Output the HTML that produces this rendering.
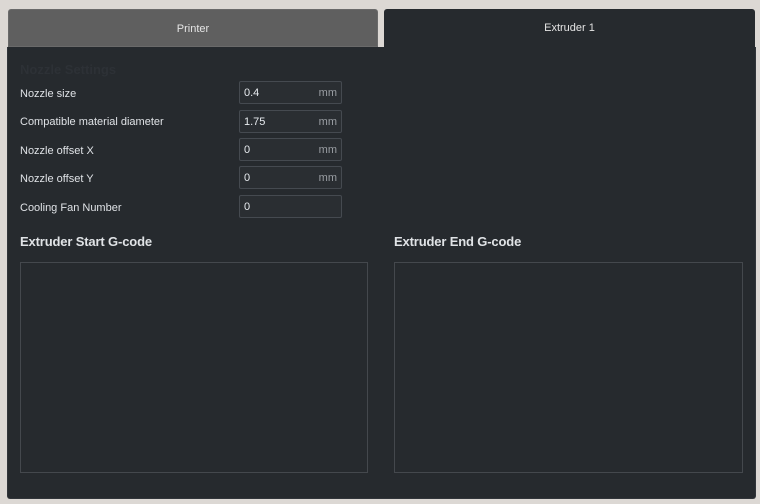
<!DOCTYPE html>
<html><head><style>
body{margin:0;width:760px;height:504px;background:#dcd8d4;font-family:"Liberation Sans",sans-serif;position:relative;overflow:hidden}
.a{position:absolute}
.tab{top:9px;height:38px;border-radius:3px 3px 0 0;text-align:center;line-height:38px;font-size:11px;color:#e4e4e4}
.panel{left:7px;top:47px;width:747px;height:451px;background:#262a2e;border-radius:0 0 3px 3px;border:1px solid #31353a;border-top:none}
.lbl{left:20px;font-size:11px;color:#dfe2e6}
.in{left:239px;width:103px;height:23px;border:1px solid #454a50;border-radius:2px;background:#2a2e32;box-sizing:border-box}
.in .v{position:absolute;left:4px;top:5px;font-size:11px;color:#e8ecf0}
.in .u{position:absolute;right:4px;top:5px;font-size:11px;color:#9a9ea3}
.h{font-size:13px;font-weight:bold;color:#e0e3e6;top:234px;letter-spacing:-0.15px}
.box{top:262px;height:211px;border:1px solid #44484d;box-sizing:border-box}
</style></head><body>
<div class="a tab" style="left:8px;width:370px;background:#5f5f5f;border:1px solid #6a6a6a;box-sizing:border-box">Printer</div>
<div class="a tab" style="left:384px;width:371px;background:#262a2e">Extruder 1</div>
<div class="a panel"></div>
<div class="a" style="left:20px;top:62px;font-size:13px;font-weight:bold;color:#2d3136">Nozzle Settings</div>
<div class="a lbl" style="top:88px">Nozzle size</div>
<div class="a in" style="top:81px"><span class="v">0.4</span><span class="u">mm</span></div>
<div class="a lbl" style="top:116px">Compatible material diameter</div>
<div class="a in" style="top:110px"><span class="v">1.75</span><span class="u">mm</span></div>
<div class="a lbl" style="top:145px">Nozzle offset X</div>
<div class="a in" style="top:138px"><span class="v">0</span><span class="u">mm</span></div>
<div class="a lbl" style="top:173px">Nozzle offset Y</div>
<div class="a in" style="top:166px"><span class="v">0</span><span class="u">mm</span></div>
<div class="a lbl" style="top:202px">Cooling Fan Number</div>
<div class="a in" style="top:195px"><span class="v">0</span></div>
<div class="a h" style="left:20px">Extruder Start G-code</div>
<div class="a h" style="left:394px">Extruder End G-code</div>
<div class="a box" style="left:20px;width:348px"></div>
<div class="a box" style="left:394px;width:349px"></div>
</body></html>
